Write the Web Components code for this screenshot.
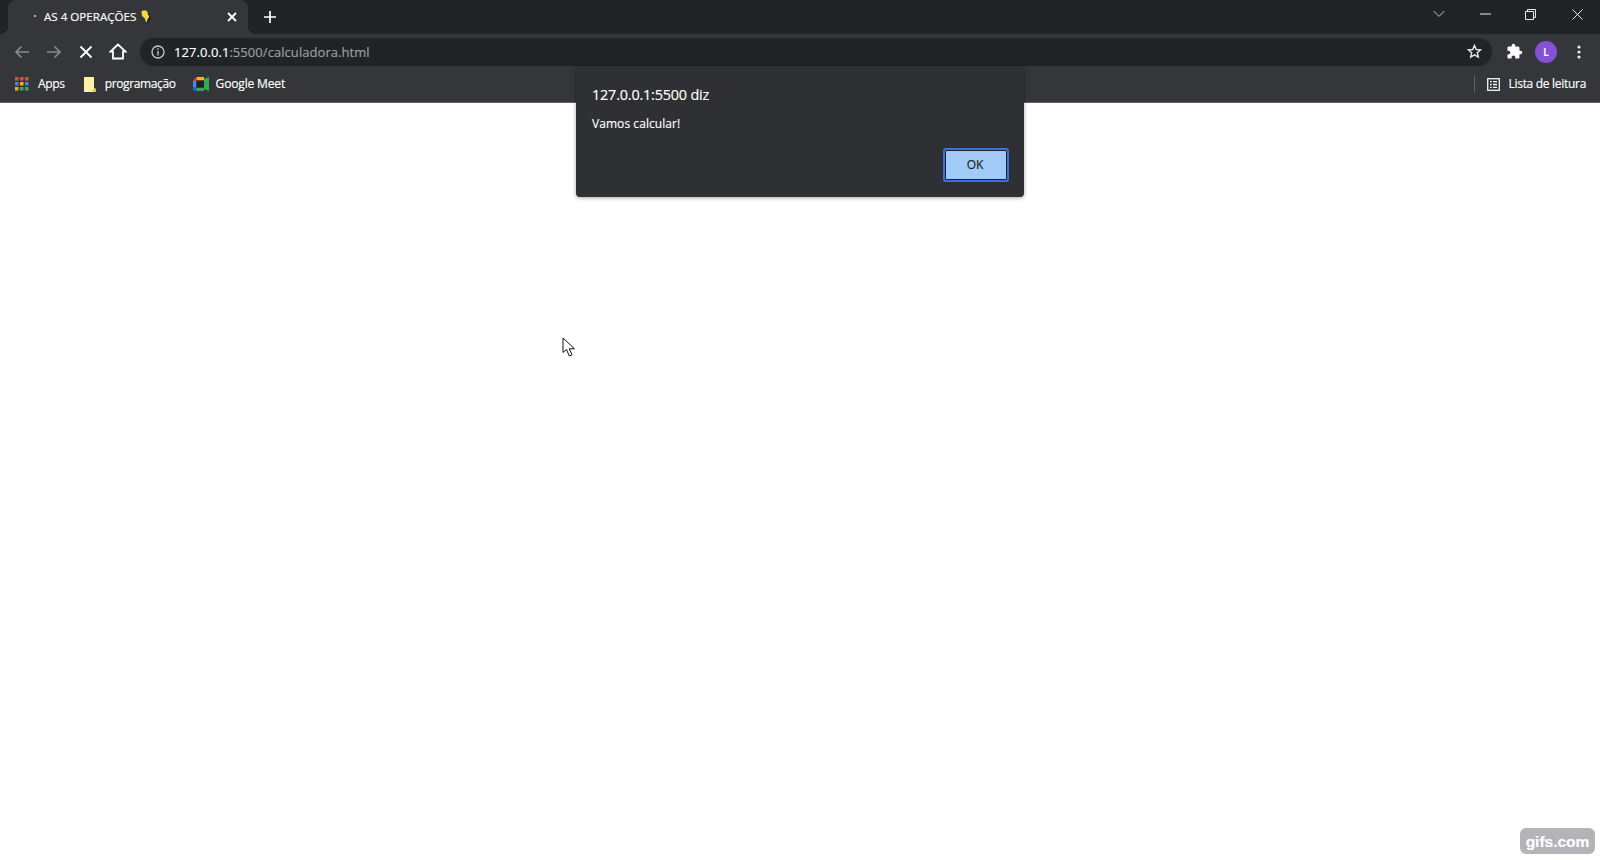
<!DOCTYPE html>
<html lang="pt"><head><meta charset="utf-8"><title>AS 4 OPERAÇÕES</title>
<style>
html,body{margin:0;height:100%;background:#fff;overflow:hidden}
body{font-family:"Open Sans","Noto Sans",sans-serif;width:1600px;height:860px;position:relative;display:flex;flex-direction:column;-webkit-text-stroke:.15px currentColor}
</style></head><body>
<tab-strip></tab-strip>
<nav-toolbar></nav-toolbar>
<bookmark-bar></bookmark-bar>
<page-area></page-area>
<js-alert origin="127.0.0.1:5500 diz" message="Vamos calcular!"></js-alert>
<mouse-cursor></mouse-cursor>
<gifs-mark></gifs-mark>
<script>
function el(name,css,html){
  customElements.define(name,class extends HTMLElement{
    connectedCallback(){
      if(this.shadowRoot)return;
      const r=this.attachShadow({mode:'open'});
      r.innerHTML='<style>'+css+'</style>'+html;
    }
  });
}
el('tab-strip',`
:host{display:flex;height:34px;background:#212427;flex:none;align-items:flex-end;padding-left:8px;box-sizing:border-box;color:#fff;font-size:11.6px;position:relative}
.tab{width:240px;height:34px;background:#35363a;border-radius:8px 8px 0 0;display:flex;align-items:center;position:relative;box-sizing:border-box;padding-left:36px;letter-spacing:0}
.tab:before,.tab:after{content:"";position:absolute;bottom:0;width:8px;height:8px}
.tab:before{left:-8px;background:radial-gradient(circle at 0 0,transparent 8px,#35363a 8.5px)}
.tab:after{right:-8px;background:radial-gradient(circle at 100% 0,transparent 8px,#35363a 8.5px)}
.dot{position:absolute;left:26px;top:15px;width:2px;height:2px;border-radius:1px;background:#d8d8ff}
.t{display:block;margin-top:-1px;white-space:nowrap}
svg{display:block;flex:none}
.hand{margin-left:5px;margin-top:-1px}
.x{position:absolute;left:218px;top:11px}
.plus{margin-left:15px;margin-bottom:10px}
.win{margin-left:auto;display:flex;align-items:center;height:34px;align-self:flex-start}
.chev{margin-right:35px;margin-top:-6px}
.min{margin-right:34px;margin-top:-6px}
.res{margin-right:36px;margin-top:-6px}
.cl{margin-right:17px;margin-top:-6px}
`,`<div class="tab"><span class="dot"></span><span class="t">AS 4 OPERAÇÕES</span>
<svg class="hand" width="10" height="13" viewBox="0 0 10 13"><path d="M6 3l2 .5.5 3 1 .5-.5 3-1.500 1-.5 2H5.500L7.500 8z" fill="#1f1a0a"/><path d="M.5 2Q.5.500 2 .500h3l1.500 1.500.5 3 1 .5v2L6.500 9 6 12H5L3.500 8 1 6z" fill="#f6d44a"/></svg>
<svg class="x" width="12" height="12" viewBox="0 0 12 12"><path d="M2 2l8 8M10 2l-8 8" stroke="#fff" stroke-width="1.800"/></svg></div>
<svg class="plus" width="14" height="14" viewBox="0 0 14 14"><path d="M7 1v12M1 7h12" stroke="#fff" stroke-width="1.700"/></svg>
<div class="win">
<svg class="chev" width="12" height="8" viewBox="0 0 12 8"><path d="M.7 1l5.300 5.400L11.300 1" fill="none" stroke="#c4c6c9" stroke-width="1"/></svg>
<svg class="min" width="11" height="2" viewBox="0 0 11 2"><path d="M0 1h11" stroke="#e8eaed" stroke-width="1"/></svg>
<svg class="res" width="11" height="11" viewBox="0 0 11 11"><path d="M.5 2.500h8v8h-8zM2.500 2.500v-2h8v8h-2" fill="none" stroke="#e8eaed" stroke-width="1"/></svg>
<svg class="cl" width="11" height="11" viewBox="0 0 11 11"><path d="M.5.500l10 10M10.500.500l-10 10" stroke="#e8eaed" stroke-width="1"/></svg>
</div>`);
el('nav-toolbar',`
:host{display:flex;height:35px;background:#35363a;flex:none;align-items:center;box-sizing:border-box;position:relative;color:#fff}
svg{display:block;flex:none}
.back{margin-left:14px}
.fwd{margin-left:16px}
.stop{margin-left:17px}
.home{margin-left:16px}
.omni{margin-left:13px;width:1352px;height:28px;background:#212427;border-radius:14px;display:flex;align-items:center;box-sizing:border-box;padding-left:11px;font-size:13px;letter-spacing:.06px;flex:none}
.url{margin-left:9px;color:#fff;margin-top:1px}.url span{color:#9aa0a6}
.star{margin-left:auto;margin-right:10px}
.puzzle{margin-left:14px}
.avatar{margin-left:12px;width:22px;height:22px;border-radius:50%;background:#8351d4;color:#fff;font-size:10px;display:flex;align-items:center;justify-content:center;font-weight:600;flex:none}
.more{margin-left:20px}
`,`<svg class="back" width="16" height="14" viewBox="0 0 16 14"><path d="M15 7H2M7.500 1.500L2 7l5.500 5.500" fill="none" stroke="#87898c" stroke-width="1.700"/></svg>
<svg class="fwd" width="16" height="14" viewBox="0 0 16 14"><path d="M1 7h13M8.500 1.500L14 7l-5.500 5.500" fill="none" stroke="#87898c" stroke-width="1.700"/></svg>
<svg class="stop" width="14" height="14" viewBox="0 0 14 14"><path d="M1.500 1.500l11 11M12.500 1.500l-11 11" stroke="#fff" stroke-width="1.800"/></svg>
<svg class="home" width="18" height="17" viewBox="0 0 18 17"><path d="M9 1.500L1.500 8.500h2.500v7h10v-7h2.500z" fill="none" stroke="#fff" stroke-width="1.800"/></svg>
<div class="omni"><svg width="14" height="14" viewBox="0 0 14 14"><circle cx="7" cy="7" r="6" fill="none" stroke="#c4c6c9" stroke-width="1.300"/><path d="M7 6v4.500M7 3.200v1.500" stroke="#c4c6c9" stroke-width="1.400"/></svg>
<span class="url">127.0.0.1<span>:5500/calculadora.html</span></span>
<svg class="star" width="15" height="15" viewBox="0 0 15 15"><path d="M7.500 1.500l1.800 4 4.300.4-3.300 2.900 1 4.300-3.800-2.300-3.800 2.300 1-4.300L1.400 5.900l4.300-.4z" fill="none" stroke="#e8eaed" stroke-width="1.400"/></svg></div>
<svg class="puzzle" width="17" height="17" viewBox="0 0 24 24"><path d="M20.500 11H19V7c0-1.100-.9-2-2-2h-4V3.500a2.500 2.500 0 0 0-5 0V5H4c-1.100 0-1.990.9-1.990 2v3.800H3.500c1.490 0 2.700 1.210 2.700 2.700s-1.210 2.700-2.700 2.700H2V20c0 1.100.9 2 2 2h3.800v-1.500c0-1.490 1.210-2.700 2.700-2.700s2.700 1.210 2.700 2.700V22H17c1.100 0 2-.9 2-2v-4h1.500a2.500 2.500 0 0 0 0-5z" fill="#fff"/></svg>
<div class="avatar">L</div>
<svg class="more" width="4" height="14" viewBox="0 0 4 14"><circle cx="2" cy="2" r="1.600" fill="#e8eaed"/><circle cx="2" cy="7" r="1.600" fill="#e8eaed"/><circle cx="2" cy="12" r="1.600" fill="#e8eaed"/></svg>`);
el('bookmark-bar',`
:host{display:flex;height:34px;background:#35363a;flex:none;align-items:center;box-sizing:border-box;padding:0 0 3px 15px;color:#fff;font-size:12px;letter-spacing:-.3px;border-bottom:1px solid #5f6368;position:relative}
svg{display:block;flex:none}
.item{display:flex;align-items:center;flex:none}
.l{margin-left:9px;margin-top:-2px}
.i2{margin-left:18px}.i2 .l{margin-left:9px;letter-spacing:-.38px}
.i3{margin-left:17px}.i3 .l{margin-left:7px;letter-spacing:-.15px}
.read{margin-left:auto;margin-right:14px;display:flex;align-items:center}
.sep{width:1px;height:18px;background:#5f6368;margin-right:12px}
.read .l{margin-left:9px}
`,`<div class="item"><svg width="14" height="14" viewBox="0 0 14 14"><g><rect x="0" y="0" width="3.500" height="3.500" fill="#e34a3c"/><rect x="5" y="0" width="3.500" height="3.500" fill="#e34a3c"/><rect x="10" y="0" width="3.500" height="3.500" fill="#e34a3c"/><rect x="0" y="5" width="3.500" height="3.500" fill="#3f83ee"/><rect x="5" y="5" width="3.500" height="3.500" fill="#f4b400"/><rect x="10" y="5" width="3.500" height="3.500" fill="#3f83ee"/><rect x="0" y="10" width="3.500" height="3.500" fill="#f4b400"/><rect x="5" y="10" width="3.500" height="3.500" fill="#3fa85a"/><rect x="10" y="10" width="3.500" height="3.500" fill="#3fa85a"/></g></svg><span class="l">Apps</span></div>
<div class="item i2"><svg width="13" height="15" viewBox="0 0 13 15"><path d="M1 0h10v11l2 1v3H1z" fill="#fdf0a5"/><path d="M10 12h3v3h-3z" fill="#e9c43f"/></svg><span class="l">programação</span></div>
<div class="item i3"><svg width="16" height="14" viewBox="0 0 16 14"><path d="M3.500 0H11v3.500H3.500z" fill="#fbbc04"/><path d="M0 4l3.500-4v4z" fill="#ea4335"/><path d="M0 4h3.500v6H0z" fill="#4285f4"/><path d="M0 10h3.500v4H1.500Q0 14 0 12.500z" fill="#1967d2"/><path d="M3.500 10.500H11V14H3.500z" fill="#34a853"/><path d="M3.500 3.500H11v7H3.500z" fill="#202124"/><path d="M11 2v10l5 2V0z" fill="#34a853"/></svg><span class="l">Google Meet</span></div>
<div class="read"><span class="sep"></span><svg width="13" height="13" viewBox="0 0 13 13"><rect x=".7" y=".7" width="11.600" height="11.600" fill="none" stroke="#f1f3f4" stroke-width="1.300"/><path d="M3 3.700h1.800M6 3.700h4M3 6.500h1.800M6 6.500h4M3 9.300h1.800M6 9.300h4" stroke="#f1f3f4" stroke-width="1.300"/></svg><span class="l">Lista de leitura</span></div>`);
el('page-area',`:host{display:block;flex:1;background:#fff}`,``);
customElements.define('js-alert',class extends HTMLElement{connectedCallback(){if(this.shadowRoot)return;const r=this.attachShadow({mode:'open'});
r.innerHTML=`<style>
:host{position:absolute;left:576px;top:66px;width:448px;height:131px;box-sizing:border-box;background:#2f3033;border-radius:0 0 4px 4px;box-shadow:0 1px 4px rgba(0,0,0,.35);color:#fff;display:flex;flex-direction:column;padding:19px 15px 15px 16px}
.o{font-size:14.400px;line-height:20px;letter-spacing:-.18px}
.m{font-size:12px;line-height:16px;margin-top:11px;letter-spacing:.06px}
button{all:unset;margin-top:auto;align-self:flex-end;width:66px;height:34px;box-sizing:border-box;background:#a1cbf6;border:2px solid #3a72dc;border-radius:3px;box-shadow:inset 0 0 0 1px #202124;color:#202124;font:12px "Open Sans","Noto Sans",sans-serif;text-align:center;line-height:28px;padding-right:2px}
</style><div class="o">${this.getAttribute('origin')}</div><div class="m">${this.getAttribute('message')}</div><button>OK</button>`;}});
el('mouse-cursor',`:host{position:absolute;left:562px;top:337px;width:14px;height:21px;display:block}svg{display:block}`,
`<svg width="14" height="21" viewBox="0 0 14 21"><path d="M1 1v14.500l3.500-3 2.800 6.500 2.700-1.200-2.800-6H12.500z" fill="#fff" stroke="#111" stroke-width="1"/></svg>`);
el('gifs-mark',`:host{position:absolute;left:1520px;top:828px;width:75px;height:26px;box-sizing:border-box;padding-top:1px;display:flex;align-items:center;justify-content:center;background:#b4b4b8;border-radius:6px;color:#fff;font:700 15.500px "Liberation Sans",sans-serif}`,`gifs.com`);
</script>
</body></html>
